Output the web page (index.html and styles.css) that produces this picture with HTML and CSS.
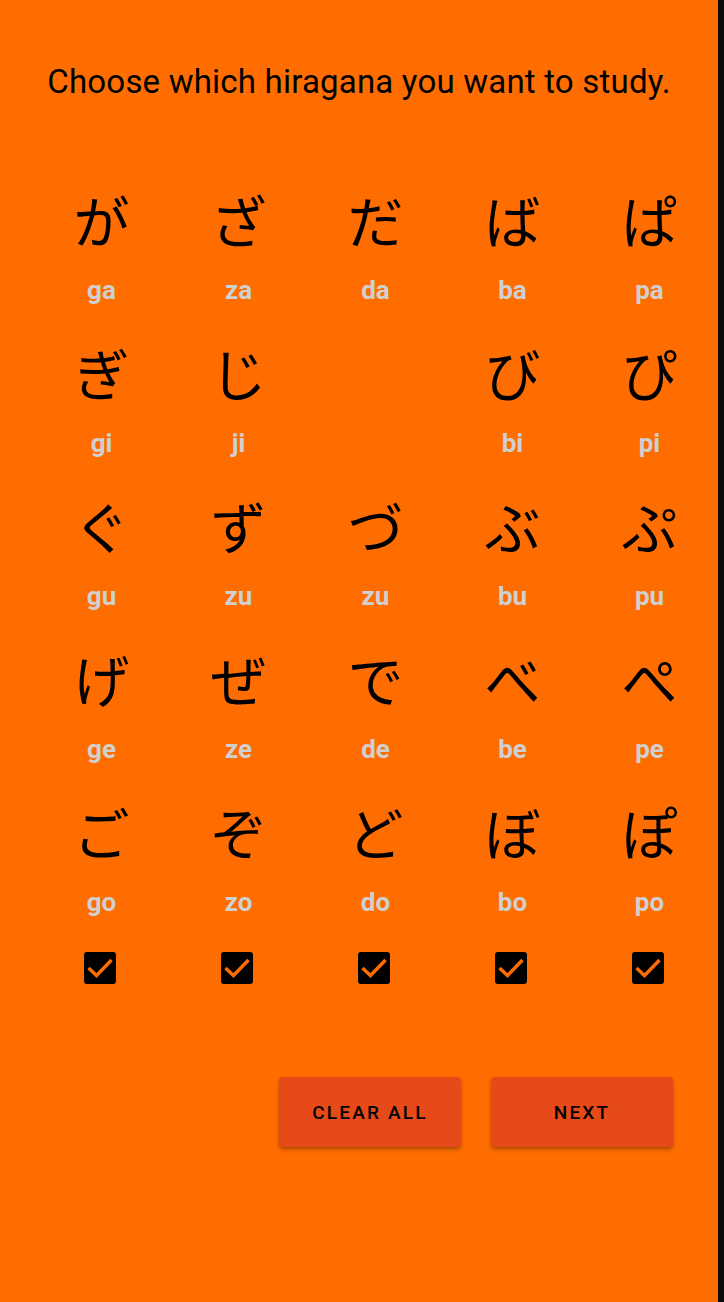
FILE: index.html
```html
<!DOCTYPE html>
<html lang="en">
<head>
<meta charset="utf-8">
<title>Hiragana</title>
<link rel="stylesheet" href="styles.css">
</head>
<body>
<div class="screen">
  <h1 class="title">Choose which hiragana you want to study.</h1>
  <div class="grid">
    <div class="cell"><span class="kana">が</span><span class="romaji">ga</span></div>
    <div class="cell"><span class="kana">ざ</span><span class="romaji">za</span></div>
    <div class="cell"><span class="kana">だ</span><span class="romaji">da</span></div>
    <div class="cell"><span class="kana">ば</span><span class="romaji">ba</span></div>
    <div class="cell"><span class="kana">ぱ</span><span class="romaji">pa</span></div>

    <div class="cell"><span class="kana">ぎ</span><span class="romaji">gi</span></div>
    <div class="cell"><span class="kana">じ</span><span class="romaji">ji</span></div>
    <div class="cell"><span class="kana"></span><span class="romaji"></span></div>
    <div class="cell"><span class="kana">び</span><span class="romaji">bi</span></div>
    <div class="cell"><span class="kana">ぴ</span><span class="romaji">pi</span></div>

    <div class="cell"><span class="kana">ぐ</span><span class="romaji">gu</span></div>
    <div class="cell"><span class="kana">ず</span><span class="romaji">zu</span></div>
    <div class="cell"><span class="kana">づ</span><span class="romaji">zu</span></div>
    <div class="cell"><span class="kana">ぶ</span><span class="romaji">bu</span></div>
    <div class="cell"><span class="kana">ぷ</span><span class="romaji">pu</span></div>

    <div class="cell"><span class="kana">げ</span><span class="romaji">ge</span></div>
    <div class="cell"><span class="kana">ぜ</span><span class="romaji">ze</span></div>
    <div class="cell"><span class="kana">で</span><span class="romaji">de</span></div>
    <div class="cell"><span class="kana">べ</span><span class="romaji">be</span></div>
    <div class="cell"><span class="kana">ぺ</span><span class="romaji">pe</span></div>

    <div class="cell"><span class="kana">ご</span><span class="romaji">go</span></div>
    <div class="cell"><span class="kana">ぞ</span><span class="romaji">zo</span></div>
    <div class="cell"><span class="kana">ど</span><span class="romaji">do</span></div>
    <div class="cell"><span class="kana">ぼ</span><span class="romaji">bo</span></div>
    <div class="cell"><span class="kana">ぽ</span><span class="romaji">po</span></div>
  </div>
  <div class="checks">
    <div class="check"><svg viewBox="0 0 32 32" width="32" height="32"><rect x="0" y="0" width="32" height="32" rx="3" fill="#000"/><polyline points="4.5,16 12.5,23.5 27.5,8" fill="none" stroke="#ff6d00" stroke-width="3.4"/></svg></div>
    <div class="check"><svg viewBox="0 0 32 32" width="32" height="32"><rect x="0" y="0" width="32" height="32" rx="3" fill="#000"/><polyline points="4.5,16 12.5,23.5 27.5,8" fill="none" stroke="#ff6d00" stroke-width="3.4"/></svg></div>
    <div class="check"><svg viewBox="0 0 32 32" width="32" height="32"><rect x="0" y="0" width="32" height="32" rx="3" fill="#000"/><polyline points="4.5,16 12.5,23.5 27.5,8" fill="none" stroke="#ff6d00" stroke-width="3.4"/></svg></div>
    <div class="check"><svg viewBox="0 0 32 32" width="32" height="32"><rect x="0" y="0" width="32" height="32" rx="3" fill="#000"/><polyline points="4.5,16 12.5,23.5 27.5,8" fill="none" stroke="#ff6d00" stroke-width="3.4"/></svg></div>
    <div class="check"><svg viewBox="0 0 32 32" width="32" height="32"><rect x="0" y="0" width="32" height="32" rx="3" fill="#000"/><polyline points="4.5,16 12.5,23.5 27.5,8" fill="none" stroke="#ff6d00" stroke-width="3.4"/></svg></div>
  </div>
  <div class="actions">
    <button class="btn">CLEAR ALL</button>
    <button class="btn">NEXT</button>
  </div>
</div>
</body>
</html>
```
FILE: styles.css
```css
html, body {
  margin: 0;
  padding: 0;
  background: #0b0b0b;
}
.screen {
  width: 718px;
  height: 1302px;
  background: #ff6d00;
  font-family: Roboto, "Noto Sans", sans-serif;
  color: #000;
  overflow: hidden;
}
.title {
  margin: 0;
  padding-top: 62px;
  font-size: 33px;
  line-height: 40px;
  font-weight: 400;
  letter-spacing: 0.2px;
  text-align: center;
}
.grid {
  margin-top: 80px;
  padding-left: 33px;
  display: grid;
  grid-template-columns: repeat(5, 137px);
  row-gap: 15px;
}
.cell {
  display: flex;
  flex-direction: column;
  align-items: center;
}
.kana {
  font-family: "Noto Sans CJK JP", sans-serif;
  font-size: 56px;
  line-height: 74px;
  height: 74px;
  padding-bottom: 6px;
}
.romaji {
  font-family: Roboto, sans-serif;
  font-weight: 700;
  font-size: 26px;
  line-height: 56px;
  height: 56px;
  padding-bottom: 2px;
  color: #d0d0d0;
}
.checks {
  margin-top: 20px;
  padding-left: 31px;
  display: grid;
  grid-template-columns: repeat(5, 137px);
}
.check {
  display: flex;
  justify-content: center;
  height: 32px;
}
.check svg {
  display: block;
}
.actions {
  margin-top: 93px;
  display: flex;
  justify-content: flex-end;
  gap: 30px;
  padding-right: 45px;
}
.btn {
  width: 182px;
  height: 70px;
  border: none;
  border-radius: 4px;
  background: #e64a19;
  color: #000;
  font-family: Roboto, sans-serif;
  font-weight: 500;
  font-size: 19px;
  letter-spacing: 2.2px;
  box-shadow: 0 3px 4px rgba(0,0,0,0.22), 0 1px 2px rgba(0,0,0,0.15);
  padding: 0;
}
```
